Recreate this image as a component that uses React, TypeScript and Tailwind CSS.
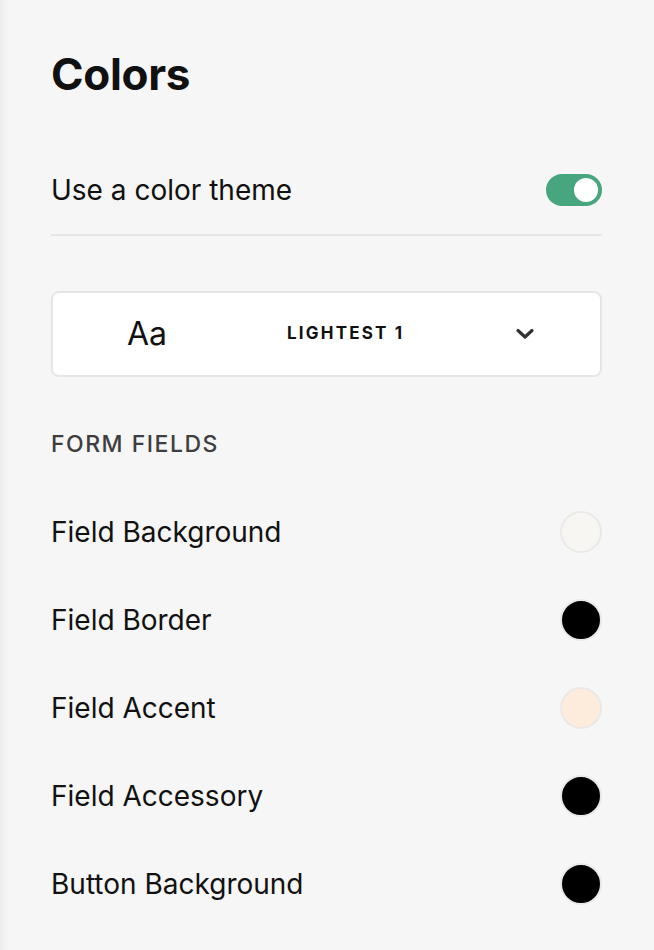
const rows = [
  { label: "Field Background", color: "bg-[#f7f6f2]" },
  { label: "Field Border", color: "bg-black" },
  { label: "Field Accent", color: "bg-[#fdebdc]" },
  { label: "Field Accessory", color: "bg-black" },
  { label: "Button Background", color: "bg-black" },
];

const Chevron = () => (
  <svg width="20" height="12" viewBox="0 0 20 12" fill="none">
    <polyline points="3,2.5 10,9 17,2.5" stroke="#333" strokeWidth="3.2" strokeLinecap="round" strokeLinejoin="round" />
  </svg>
);

export default function App() {
  return (
    <div className="min-h-[950px] w-[654px] bg-[#f6f6f6] shadow-[inset_10px_0_10px_-8px_rgba(0,0,0,0.06)] pl-[51px] pr-[52px] pt-[50px] font-['Inter','Liberation_Sans',sans-serif] text-[#111]">
      <h1 className="text-[44px] leading-[48px] font-bold tracking-[-0.3px]">Colors</h1>

      <div className="mt-[76px] flex h-8 items-center justify-between">
        <span className="text-[28px]">Use a color theme</span>
        <div className="flex h-8 w-14 items-center justify-end rounded-full bg-[#47a67e] pr-1">
          <div className="h-6 w-6 rounded-full bg-white" />
        </div>
      </div>

      <div className="mt-[28px] h-[2px] bg-[#e6e6e6]" />

      <div className="mt-[55px] flex h-[86px] items-center rounded-lg border-2 border-[#e6e6e6] bg-white">
        <span className="w-[150px] pl-[74px] text-[32px] font-normal">Aa</span>
        <span className="flex-1 pl-[84px] text-[17px] font-bold tracking-[2.2px]">LIGHTEST 1</span>
        <div className="pr-[65px]">
          <Chevron />
        </div>
      </div>

      <div className="mt-[55px] text-[23px] leading-6 font-medium tracking-[1.5px] text-[#3e3e3e]">FORM FIELDS</div>

      <div className="mt-8 flex flex-col">
        {rows.map((r) => (
          <div key={r.label} className="flex h-[88px] items-center justify-between">
            <span className="text-[28px]">{r.label}</span>
            <div className={`h-[42px] w-[42px] rounded-full border-2 border-[#e9e9e9] ${r.color}`} />
          </div>
        ))}
      </div>
    </div>
  );
}
